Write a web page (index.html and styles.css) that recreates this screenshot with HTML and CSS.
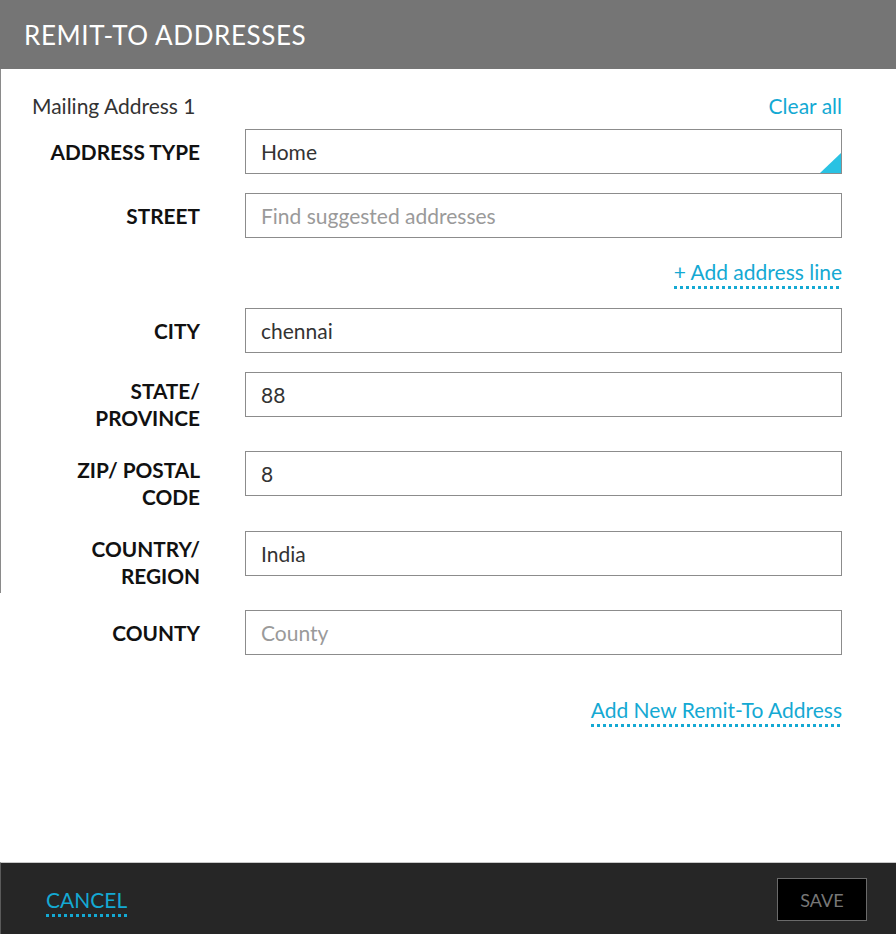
FILE: index.html
```html
<!DOCTYPE html>
<html lang="en">
<head>
<meta charset="utf-8">
<title>Remit-To Addresses</title>
<link rel="stylesheet" href="styles.css">
</head>
<body>
<div class="dialog">
  <header class="dialog-header">
    <h1 class="dialog-title">REMIT-TO ADDRESSES</h1>
  </header>
  <main class="dialog-body">
    <div class="section-head">
      <span class="section-title">Mailing Address 1</span>
      <a class="link" href="#">Clear all</a>
    </div>
    <div class="form">
      <div class="row">
        <label class="label">ADDRESS TYPE</label>
        <div class="field select">
          <span class="value">Home</span>
          <span class="corner"></span>
        </div>
      </div>
      <div class="row">
        <label class="label">STREET</label>
        <div class="field"><span class="placeholder">Find suggested addresses</span></div>
      </div>
      <div class="row link-row">
        <a class="link dotted" href="#">+ Add address line</a>
      </div>
      <div class="row">
        <label class="label">CITY</label>
        <div class="field"><span class="value">chennai</span></div>
      </div>
      <div class="row">
        <label class="label two-line">STATE/<br>PROVINCE</label>
        <div class="field"><span class="value">88</span></div>
      </div>
      <div class="row">
        <label class="label two-line">ZIP/ POSTAL<br>CODE</label>
        <div class="field"><span class="value">8</span></div>
      </div>
      <div class="row">
        <label class="label two-line">COUNTRY/<br>REGION</label>
        <div class="field"><span class="value">India</span></div>
      </div>
      <div class="row">
        <label class="label">COUNTY</label>
        <div class="field"><span class="placeholder">County</span></div>
      </div>
    </div>
    <div class="add-new">
      <a class="link dotted" href="#">Add New Remit-To Address</a>
    </div>
  </main>
  <footer class="dialog-footer">
    <a class="cancel dotted" href="#">CANCEL</a>
    <button class="save" type="button">SAVE</button>
  </footer>
</div>
</body>
</html>
```
FILE: styles.css
```css
* { box-sizing: border-box; }
html, body { margin: 0; padding: 0; }
body {
  font-family: Lato, "Open Sans", "Liberation Sans", sans-serif;
  background: #ffffff;
  color: #333333;
}
.dialog {
  width: 896px;
  height: 934px;
  display: flex;
  flex-direction: column;
}
.dialog-header {
  height: 69px;
  background: #757575;
  display: flex;
  align-items: center;
  padding-left: 24px;
  flex: none;
}
.dialog-title {
  margin: 0;
  font-size: 26px;
  font-weight: 400;
  color: #ffffff;
  letter-spacing: 0.6px;
}
.dialog-body {
  flex: 1;
  position: relative;
  padding: 0 54px 0 32px;
}
.dialog-body::before {
  content: "";
  position: absolute;
  left: 0;
  top: 0;
  width: 1px;
  height: 524px;
  background: #8a8a8a;
}
.section-head {
  display: flex;
  justify-content: space-between;
  align-items: center;
  margin-top: 25px;
  height: 24px;
  line-height: 24px;
}
.section-title {
  font-size: 21px;
  color: #333333;
}
.link {
  color: #14a9d3;
  font-size: 21px;
  text-decoration: none;
}
.dotted {
  padding-bottom: 5px;
  background-image: repeating-linear-gradient(to right, #14a9d3 0 3px, transparent 3px 6px);
  background-size: 100% 3px;
  background-repeat: no-repeat;
  background-position: left bottom;
}
.form {
  margin-top: 11px;
  display: flex;
  flex-direction: column;
  gap: 19.3px;
}
.row {
  display: flex;
  align-items: flex-start;
  min-height: 45px;
}
.label {
  width: 168px;
  text-align: right;
  font-weight: 700;
  font-size: 20.8px;
  line-height: 27px;
  padding-top: 9px;
  color: #111111;
  flex: none;
}
.label.two-line {
  padding-top: 4.5px;
  min-height: 60px;
}
.field {
  margin-left: 45px;
  flex: 1;
  height: 45px;
  border: 1px solid #8c8c8c;
  padding-left: 15px;
  display: flex;
  align-items: center;
  font-size: 21px;
  position: relative;
}
.value { color: #333333; }
.placeholder { color: #9a9a9a; }
.corner {
  position: absolute;
  right: 0;
  bottom: 0;
  width: 21px;
  height: 20px;
  background: #29c2e3;
  clip-path: polygon(100% 0, 100% 100%, 0 100%);
}
.link-row {
  min-height: 30px;
  justify-content: flex-end;
  align-items: flex-start;
  padding-top: 2px;
}
.link-row .link { line-height: 24px; }
.add-new {
  display: flex;
  justify-content: flex-end;
  margin-top: 43px;
}
.add-new .link { line-height: 24px; }
.dialog-footer {
  height: 72px;
  flex: none;
  background: #262626;
  border-top: 1px solid #c8c8c8;
  border-left: 1px solid #5a5a5a;
  display: flex;
  align-items: center;
  justify-content: space-between;
  padding: 0 29px 0 45px;
}
.cancel {
  color: #14a9d3;
  font-size: 21px;
  line-height: 24px;
  text-decoration: none;
  margin-top: 8px;
}
.save {
  width: 90px;
  height: 43px;
  background: #000000;
  border: 1px solid #6a6a6a;
  color: #777777;
  font-family: Lato, "Open Sans", "Liberation Sans", sans-serif;
  font-size: 18px;
  padding: 0;
  margin-top: 2px;
}
```
